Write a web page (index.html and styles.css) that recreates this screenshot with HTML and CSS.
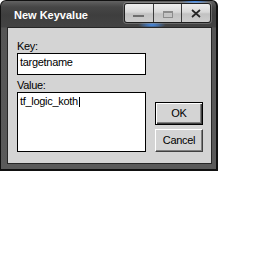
FILE: index.html
```html
<!DOCTYPE html>
<html>
<head>
<meta charset="utf-8">
<link rel="stylesheet" href="styles.css">
</head>
<body>
<div class="window">
  <div class="titlebar">
    <span class="title">New Keyvalue</span>
    <div class="caption">
      <span class="cb min"><svg width="12" height="12" viewBox="0 0 12 12"><rect x="0" y="8" width="11" height="2" fill="#6e6e6e"/></svg></span>
      <span class="cb max"><svg width="12" height="12" viewBox="0 0 12 12"><rect x="1.5" y="4.5" width="9" height="6" fill="none" stroke="#8c8c8c"/><rect x="1" y="4" width="10" height="2" fill="#8c8c8c"/></svg></span>
      <span class="cb close"><svg width="12" height="12" viewBox="0 0 12 12"><path d="M2 3 L10 10 M10 3 L2 10" stroke="#262626" stroke-width="1.7" fill="none"/></svg></span>
    </div>
  </div>
  <div class="client">
    <div class="fields">
      <div class="label">Key:</div>
      <div class="input key">targetname</div>
      <div class="label value-label">Value:</div>
      <div class="input value">tf_logic_koth<span class="caret"></span></div>
    </div>
    <div class="buttons">
      <button class="btn default">OK</button>
      <button class="btn">Cancel</button>
    </div>
  </div>
</div>
</body>
</html>
```
FILE: styles.css
```css
* { box-sizing: border-box; }
body {
  margin: 0;
  background: #fff;
  font-family: "Liberation Sans", Arial, sans-serif;
  font-size: 11px;
}
.window {
  width: 218px;
  height: 171px;
  border: 1px solid #111;
  border-bottom-width: 2px;
  border-right-width: 2px;
  border-radius: 6px 6px 0 0;
  padding: 0 5px 6px 7px;
  display: flex;
  flex-direction: column;
  background:
    radial-gradient(14px 4px at 194px 0px, rgba(70,150,255,0.95), rgba(70,150,255,0) 100%),
    radial-gradient(14px 3px at 151px 24px, rgba(70,150,255,0.9), rgba(70,150,255,0) 100%),
    linear-gradient(to bottom, #626262 0, #464646 6px, #3e3e3e 14px, #434343 26px, #555 27px, #5a5a5a 100%);
}
.titlebar {
  height: 27px;
  display: flex;
  align-items: flex-start;
}
.title {
  color: #fff;
  font-weight: bold;
  line-height: 13px;
  margin: 8px 0 0 6px;
}
.caption {
  margin: 2px 0 0 auto;
  display: flex;
  height: 20px;
  border: 1px solid #1f1f1f;
  border-radius: 3px;
  overflow: hidden;
  box-shadow: 0 0 0 1px rgba(255,255,255,0.22);
}
.cb {
  display: flex;
  align-items: center;
  justify-content: center;
  height: 100%;
  background: linear-gradient(to bottom, #ededed 0, #d8d8d8 45%, #c2c2c2 55%, #cdcdcd 100%);
}
.cb.min { width: 28px; }
.cb.max { width: 28px; border-left: 1px solid #3a3a3a; }
.cb.close { width: 29px; border-left: 1px solid #3a3a3a; }
.client {
  flex: 1;
  background: #d4d4d4;
  display: flex;
  padding: 12px 0 0 9px;
  box-shadow: 0 0 0 1px #262626;
  letter-spacing: -0.3px;
}
.fields {
  width: 129px;
  display: flex;
  flex-direction: column;
}
.label {
  line-height: 13px;
  color: #000;
}
.value-label { margin-top: 4px; }
.input {
  background: #fff;
  border: 1px solid #000;
  padding: 2px 2px;
  line-height: 13px;
  color: #000;
}
.input.key { height: 22px; }
.input.value { height: 60px; }
.caret {
  display: inline-block;
  width: 1px;
  height: 10px;
  margin-left: 1px;
  background: #000;
  vertical-align: -2px;
}
.buttons {
  margin-left: 9px;
  padding-top: 62px;
  width: 48px;
  display: flex;
  flex-direction: column;
  gap: 4px;
}
.btn {
  height: 23px;
  width: 48px;
  font: inherit;
  letter-spacing: inherit;
  line-height: 13px;
  color: #000;
  background: #d4d4d4;
  padding: 0;
  border: 1px solid;
  border-color: #fff #404040 #404040 #fff;
  box-shadow: inset -1px -1px #808080;
}
.btn.default {
  border-color: #000;
  box-shadow: inset 1px 1px #fff, inset -1px -1px #404040, inset -2px -2px #808080;
}
```
